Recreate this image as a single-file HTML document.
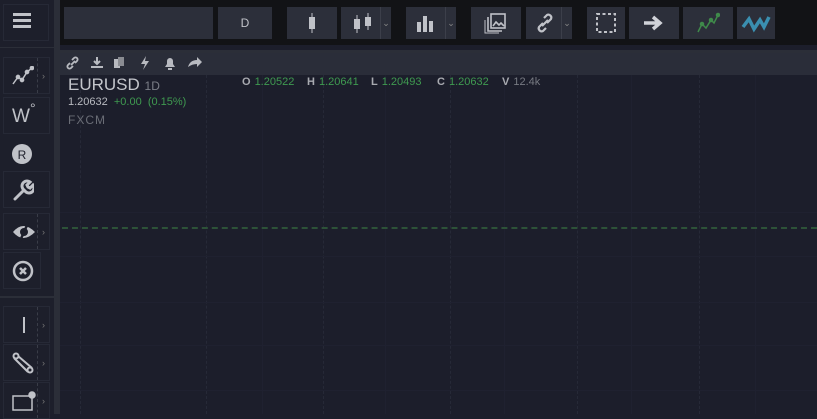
<!DOCTYPE html>
<html><head><meta charset="utf-8"><style>
*{margin:0;padding:0;box-sizing:border-box}
body{width:817px;height:414px;background:#1c1e2b;overflow:hidden;position:relative;font-family:"Liberation Sans",sans-serif}
.a{position:absolute}
.btn{position:absolute;top:7px;height:32px;background:#2c2f3a;display:flex;align-items:center;justify-content:center;color:#b8bac0}
.sb{position:absolute;left:3px;width:47px;height:37px;border:1px solid #262936;display:flex;align-items:center;padding-left:8px}
.arr{position:absolute;right:0;top:0;bottom:0;width:12px;border-left:1px dashed #3a3d48;color:#777;font-size:9px;display:flex;align-items:center;justify-content:center}
.vg{position:absolute;top:75px;bottom:0;width:0;border-left:1px dashed #262937}
.vs{position:absolute;top:75px;bottom:0;width:1px;background:#1f2130}
.hs{position:absolute;left:60px;right:0;height:1px;background:#1f2130}
.o{position:absolute;top:76px;font-size:11px;color:#a8aab0}
.o b{margin-right:4px}
.o span{color:#3f9a50}
</style></head><body>
<div class="a" style="left:0;top:0;width:54px;height:414px;background:#1d1f2b"></div>
<div class="a" style="left:54px;top:0;width:6px;height:414px;background:#2b2e38"></div>
<div class="a" style="left:0;top:47px;width:54px;height:1px;background:#2b2e38"></div>
<div class="a" style="left:0;top:296px;width:54px;height:2px;background:#2b2e38"></div>
<div class="a" style="left:3px;top:4px;width:46px;height:37px;border:1px solid #262936"></div>
<div class="a" style="left:13px;top:13px;width:18px;height:3px;background:#c0c2c8;box-shadow:0 6px 0 #c0c2c8,0 12px 0 #c0c2c8"></div>
<div class="a" style="left:60px;top:0;width:757px;height:45px;background:#121316"></div>
<div class="btn" style="left:64px;width:149px"></div>
<div class="btn" style="left:218px;width:54px;font-size:12px;color:#c0c2c8">D</div>
<div class="btn" style="left:287px;width:50px"><svg width="12" height="22"><rect x="3" y="5" width="6" height="12" fill="#c0c2c8"/><rect x="5.5" y="1" width="1" height="20" fill="#c0c2c8"/></svg></div>
<div class="btn" style="left:341px;width:50px;justify-content:flex-start;padding-left:12px"><svg width="24" height="22"><rect x="1" y="7" width="6" height="10" fill="#c0c2c8"/><rect x="3.5" y="3" width="1" height="18" fill="#c0c2c8"/><rect x="12" y="5" width="6" height="9" fill="#c0c2c8"/><rect x="14.5" y="1" width="1" height="17" fill="#c0c2c8"/></svg><span class="a" style="right:0;top:0;bottom:0;width:11px;border-left:1px solid #3c3f4a;font-size:9px;color:#888;display:flex;align-items:center;justify-content:center">⌄</span></div>
<div class="btn" style="left:406px;width:50px;justify-content:flex-start;padding-left:10px"><svg width="20" height="20"><rect x="1" y="9" width="4" height="10" fill="#c0c2c8"/><rect x="7" y="3" width="4" height="16" fill="#c0c2c8"/><rect x="13" y="8" width="4" height="11" fill="#c0c2c8"/></svg><span class="a" style="right:0;top:0;bottom:0;width:11px;border-left:1px solid #3c3f4a;font-size:9px;color:#888;display:flex;align-items:center;justify-content:center">⌄</span></div>
<div class="btn" style="left:471px;width:50px"><svg width="24" height="22" fill="none" stroke="#c0c2c8" stroke-width="1.6"><rect x="7" y="2" width="14" height="14"/><path d="M4 5v14h14"/><path d="M1 8v13h14" stroke-width="1"/><path d="M9 14l3-4 3 3 2-2 3 3"/></svg></div>
<div class="btn" style="left:526px;width:46px;justify-content:flex-start;padding-left:9px"><svg width="20" height="22" fill="none" stroke="#c0c2c8" stroke-width="2.2"><path d="M9 6l3-3a3 3 0 014 4l-4 4M11 16l-3 3a3 3 0 01-4-4l4-4M7 14l6-6"/></svg><span class="a" style="right:0;top:0;bottom:0;width:11px;border-left:1px solid #3c3f4a;font-size:9px;color:#888;display:flex;align-items:center;justify-content:center">⌄</span></div>
<div class="btn" style="left:587px;width:38px"><svg width="22" height="22" fill="none" stroke="#c0c2c8" stroke-width="2" stroke-dasharray="3 2.5"><rect x="2" y="2" width="18" height="18"/></svg></div>
<div class="btn" style="left:629px;width:50px"><svg width="22" height="18"><path d="M1 9h14M10 3l7 6-7 6" fill="none" stroke="#d0d2d8" stroke-width="3.5"/></svg></div>
<div class="btn" style="left:683px;width:50px"><svg width="24" height="22" fill="none" stroke="#3f8a4a" stroke-width="1.5"><path d="M2 20l4-8 4 4 5-8 3 3 4-8"/><circle cx="6" cy="12" r="1.5" fill="#3f8a4a"/><circle cx="15" cy="8" r="1.5" fill="#3f8a4a"/><circle cx="22" cy="3" r="1.5" fill="#3f8a4a"/></svg></div>
<div class="btn" style="left:737px;width:38px"><svg width="30" height="20" fill="none" stroke="#3a8fb0" stroke-width="3.5"><path d="M2 14l6-8 5 10 6-9 4 7 5-10"/></svg></div>
<div class="a" style="left:60px;top:50px;width:757px;height:3px;background:#2b2e38"></div>
<div class="a" style="left:60px;top:53px;width:757px;height:22px;background:#2a2d39"></div>
<svg class="a" style="left:66px;top:55px" width="140" height="16" fill="#b8bac0" stroke="#b8bac0">
<path d="M6 5l2-2a2 2 0 013 3l-2 2M7 11l-2 2a2 2 0 01-3-3l2-2M5 10l4-4" fill="none" stroke-width="1.8"/>
<path d="M31 2v7M28 6l3 3 3-3" fill="none" stroke-width="2"/><rect x="25" y="11" width="12" height="2" stroke="none"/>
<rect x="48" y="4" width="6" height="9" stroke="none"/><rect x="52" y="2" width="6" height="9" stroke="none" fill="#8a8c92"/>
<path d="M80 1l-5 8h4l-2 6 6-9h-4z" stroke="none"/>
<path d="M99 12h10l-2-3v-3a3 3 0 00-6 0v3z M102 13h4v2h-4z" stroke="none"/>
<path d="M122 12q2-7 9-7v-3l5 5-5 5v-3q-5 0-9 3z" stroke="none"/>
</svg>
<div class="vg" style="left:80px"></div><div class="vg" style="left:206px"></div><div class="vg" style="left:323px"></div><div class="vg" style="left:450px"></div><div class="vg" style="left:577px"></div><div class="vg" style="left:699px"></div>
<div class="vs" style="left:262px"></div><div class="vs" style="left:385px"></div><div class="vs" style="left:504px"></div><div class="vs" style="left:631px"></div><div class="vs" style="left:755px"></div>
<div class="hs" style="top:212px"></div><div class="hs" style="top:256px"></div><div class="hs" style="top:302px"></div><div class="hs" style="top:345px"></div><div class="hs" style="top:390px"></div>
<div class="a" style="left:62px;top:227px;width:755px;border-top:2px dashed #2d5238"></div>
<div class="a" style="left:68px;top:75px;font-size:17px;color:#c4c6cc">EURUSD <span style="font-size:12px;color:#7c7f88">1D</span></div>
<div class="a" style="left:68px;top:96px;font-size:11px;color:#b8bac0">1.20632 &nbsp;<span style="color:#3f9a50">+0.00 &nbsp;(0.15%)</span></div>
<div class="a" style="left:68px;top:113px;font-size:12px;color:#6a6d76;letter-spacing:1px">FXCM</div>
<div class="o" style="left:242px"><b>O</b><span>1.20522</span></div>
<div class="o" style="left:307px"><b>H</b><span>1.20641</span></div>
<div class="o" style="left:371px"><b>L</b><span>1.20493</span></div>
<div class="o" style="left:437px"><b>C</b><span>1.20632</span></div>
<div class="o" style="left:502px"><b>V</b><span style="color:#777a82">12.4k</span></div>
<div class="sb" style="top:57px"><svg width="22" height="20" fill="none" stroke="#c0c2c8" stroke-width="1.5"><path d="M1 18l5-7 4 3 5-8 5-4"/><circle cx="6" cy="11" r="1.6" fill="#c0c2c8"/><circle cx="10" cy="14" r="1.6" fill="#c0c2c8"/><circle cx="15" cy="6" r="1.6" fill="#c0c2c8"/><circle cx="20" cy="2" r="1.6" fill="#c0c2c8"/></svg><span class="arr">›</span></div>
<div class="sb" style="top:97px;color:#c0c2c8;font-size:19px;align-items:flex-start;padding-top:8px">W<span style="font-size:14px;margin-top:-6px">°</span></div>
<div class="sb" style="top:135px;border:none"><svg width="22" height="22"><circle cx="11" cy="11" r="10" fill="#c0c2c8"/><text x="11" y="16" font-size="12" text-anchor="middle" fill="#1d1f2b" font-family="Liberation Sans">R</text></svg></div>
<div class="sb" style="top:171px"><svg width="22" height="22"><path d="M3 20l9-9M12 11a5 5 0 016-8l-3 3 1 2 2 1 3-3a5 5 0 01-8 6" fill="none" stroke="#c0c2c8" stroke-width="3" stroke-linecap="round"/></svg></div>
<div class="sb" style="top:213px"><svg width="24" height="22"><path d="M1 11q10-12 22 0q-12 12-22 0z" fill="#c0c2c8"/><circle cx="12" cy="11" r="4" fill="#1d1f2b"/><path d="M16 2L8 20" stroke="#1d1f2b" stroke-width="2.5"/></svg><span class="arr">›</span></div>
<div class="sb" style="top:252px;width:38px"><svg width="22" height="22" fill="none" stroke="#c0c2c8" stroke-width="2.5"><circle cx="11" cy="11" r="9"/><path d="M8 8l6 6M14 8l-6 6"/></svg></div>
<div class="sb" style="top:306px"><div style="width:2px;height:16px;background:#c0c2c8;margin-left:11px"></div><span class="arr">›</span></div>
<div class="sb" style="top:344px"><svg width="22" height="22" fill="none" stroke="#c0c2c8" stroke-width="2"><circle cx="4" cy="4" r="2.5"/><circle cx="18" cy="18" r="2.5"/><path d="M6 4l14 12M2 6l14 14"/></svg><span class="arr">›</span></div>
<div class="sb" style="top:382px"><svg width="24" height="22" fill="none" stroke="#c0c2c8" stroke-width="1.5"><rect x="1" y="6" width="19" height="14"/><circle cx="20" cy="5" r="3" fill="#c0c2c8"/></svg><span class="arr">›</span></div>
</body></html>
